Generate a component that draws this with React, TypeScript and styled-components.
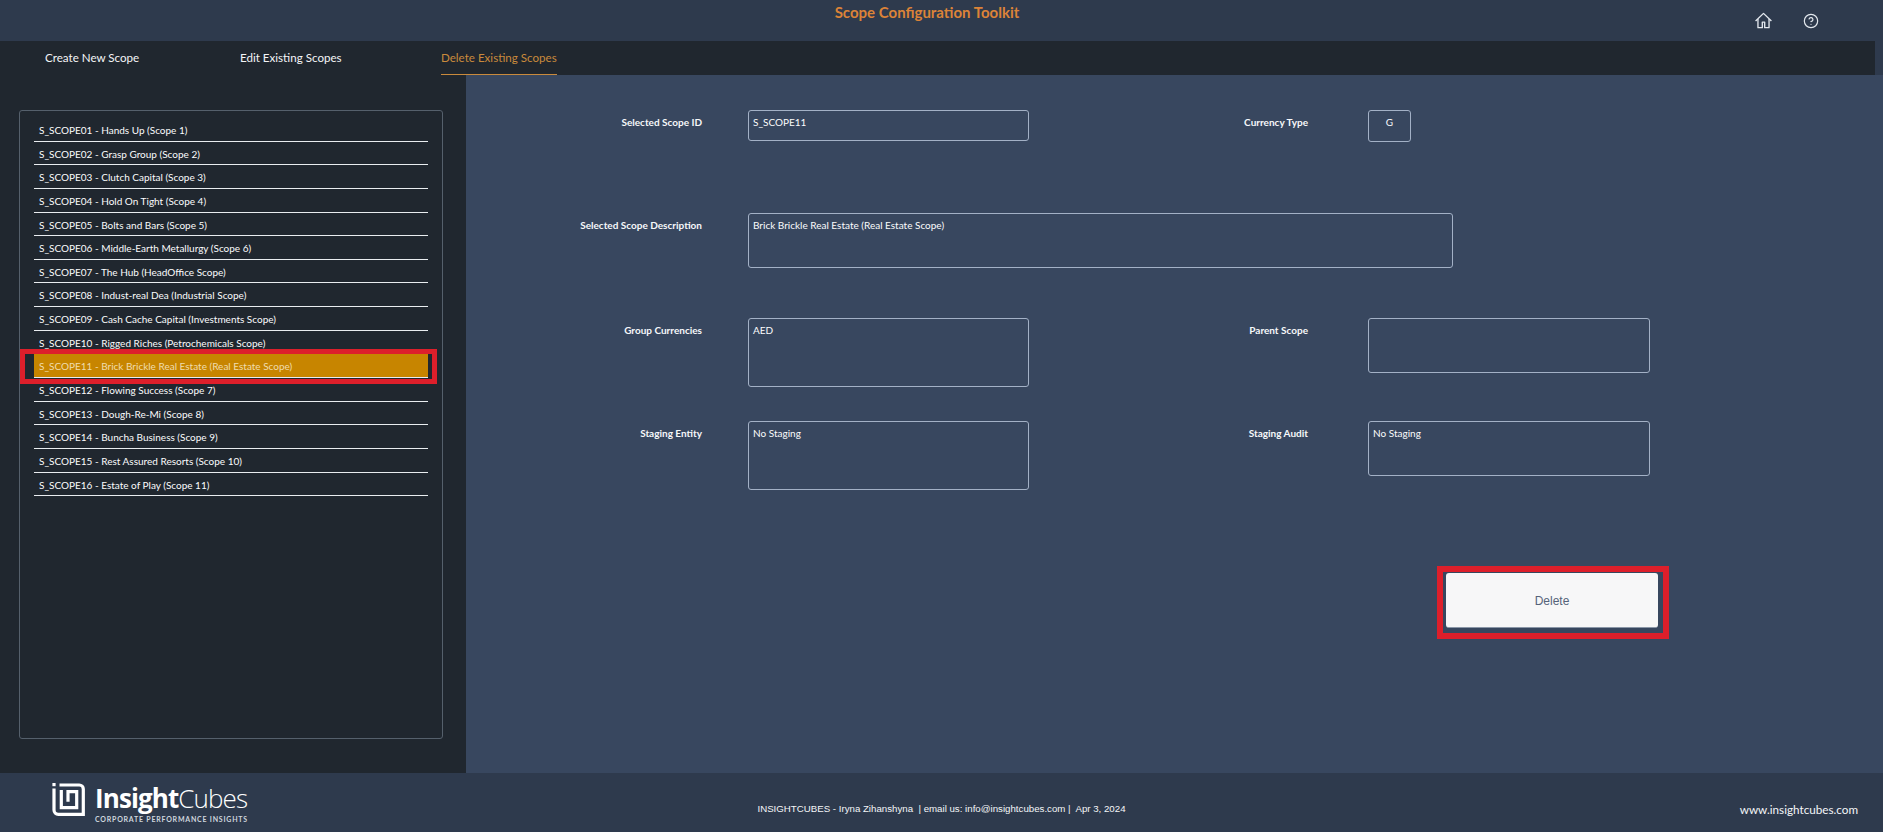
import { createGlobalStyle } from 'styled-components'
import styled from 'styled-components'
import { CircleHelp } from 'lucide-react'

const scopes = [
  'S_SCOPE01 - Hands Up (Scope 1)',
  'S_SCOPE02 - Grasp Group (Scope 2)',
  'S_SCOPE03 - Clutch Capital (Scope 3)',
  'S_SCOPE04 - Hold On Tight (Scope 4)',
  'S_SCOPE05 - Bolts and Bars (Scope 5)',
  'S_SCOPE06 - Middle-Earth Metallurgy (Scope 6)',
  'S_SCOPE07 - The Hub (HeadOffice Scope)',
  'S_SCOPE08 - Indust-real Dea (Industrial Scope)',
  'S_SCOPE09 - Cash Cache Capital (Investments Scope)',
  'S_SCOPE10 - Rigged Riches (Petrochemicals Scope)',
  'S_SCOPE11 - Brick Brickle Real Estate (Real Estate Scope)',
  'S_SCOPE12 - Flowing Success (Scope 7)',
  'S_SCOPE13 - Dough-Re-Mi (Scope 8)',
  'S_SCOPE14 - Buncha Business (Scope 9)',
  'S_SCOPE15 - Rest Assured Resorts (Scope 10)',
  'S_SCOPE16 - Estate of Play (Scope 11)',
]

const GlobalStyle = createGlobalStyle`
  html, body {
    margin: 0;
    padding: 0;
    background: #2e3a4d;
    overflow: hidden;
  }
  * {
    box-sizing: border-box;
  }
`

const Page = styled.div`
  width: 1883px;
  height: 832px;
  display: flex;
  flex-direction: column;
  font-family: Lato, 'Liberation Sans', sans-serif;
  color: #f2f4f6;
`

const Header = styled.header`
  height: 41px;
  display: grid;
  grid-template-columns: 1fr auto 1fr;
  background: #2e3a4d;
`

const Title = styled.h1`
  margin: 3px 29px 0 0;
  font-size: 15px;
  line-height: 18px;
  font-weight: 700;
  color: #dc8338;
`

const HeaderIcons = styled.div`
  display: flex;
  justify-content: flex-end;
  align-items: center;
  gap: 30px;
  padding-right: 64px;
  color: #e3e8ee;
`

const HomeIcon = styled.svg`
  width: 19px;
  height: 19px;
  fill: none;
  stroke: currentColor;
  stroke-width: 1.7;
  stroke-linejoin: round;
`

const TabBar = styled.nav`
  width: 1875px;
  height: 34px;
  display: flex;
  background: #20272f;
`

const Tab = styled.div<{ $active?: boolean; $width: number; $inset?: number }>`
  width: ${props => props.$width}px;
  height: 34px;
  padding: 9px 0 0 ${props => props.$inset ?? 0}px;
  font-size: 11.6px;
  line-height: 16px;
  color: ${props => (props.$active ? '#c98a3c' : '#f4f5f7')};
`

const TabLabel = styled.span`
  display: inline-block;
  height: 25px;
  border-bottom: 1px solid #c98a3c;
`

const Body = styled.div`
  flex: 1;
  display: flex;
  min-height: 0;
`

const Sidebar = styled.aside`
  width: 466px;
  padding: 35px 23px 35px 19px;
  background: #20272f;
`

const ListBox = styled.div`
  height: 629px;
  padding: 7px 14px;
  border: 1px solid #55606c;
  border-radius: 3px;
`

const Row = styled.div<{ $selected?: boolean }>`
  position: relative;
  height: 23.65px;
  padding: 5px 0 0 5px;
  font-size: 10px;
  line-height: 14px;
  white-space: nowrap;
  border-bottom: 1px solid #e9edf0;
  background: ${props => (props.$selected ? '#c78500' : 'transparent')};
  color: ${props => (props.$selected ? '#efdcae' : '#fbfcfd')};
`

const RedMark = styled.div`
  position: absolute;
  top: -5px;
  bottom: -7px;
  left: -14px;
  right: -9px;
  border: 5px solid #dd1f2b;
  pointer-events: none;
`

const Main = styled.main`
  flex: 1;
  padding-top: 35px;
  background: #38475f;
`

const FormRow = styled.div<{ $height: number }>`
  display: flex;
  align-items: flex-start;
  height: ${props => props.$height}px;
`

const Label = styled.div<{ $width: number }>`
  width: ${props => props.$width}px;
  padding-top: 5px;
  font-size: 10px;
  line-height: 14px;
  font-weight: 700;
  text-align: right;
  color: #f6f8fa;
`

const Field = styled.div<{ $width: number; $height: number; $gap: number; $center?: boolean }>`
  width: ${props => props.$width}px;
  height: ${props => props.$height}px;
  margin-left: ${props => props.$gap}px;
  padding: 4px;
  font-size: 10px;
  line-height: 14px;
  border: 1px solid #a3b1c6;
  border-radius: 3px;
  text-align: ${props => (props.$center ? 'center' : 'left')};
  color: #fbfcfd;
`

const ActionRow = styled.div`
  display: flex;
  justify-content: flex-end;
  padding-right: 214px;
  margin-top: 75px;
`

const RedFrame = styled.div`
  padding: 1px 5px 5px 3px;
  border: 6px solid #dd1f2b;
`

const DeleteButton = styled.button`
  display: block;
  width: 212px;
  height: 55px;
  padding: 2px 0 0;
  border: none;
  border-bottom: 1px solid #8b97a8;
  border-radius: 3px;
  background: #f7f7f8;
  font-family: 'Liberation Sans', Arial, sans-serif;
  font-size: 12px;
  color: #55637a;
`

const Footer = styled.footer`
  height: 59px;
  display: grid;
  grid-template-columns: 1fr auto 1fr;
  padding: 0 25px 0 52px;
  background: #2e3a4d;
`

const Logo = styled.div`
  display: flex;
  gap: 10px;
  margin-top: 10px;
`

const LogoMark = styled.svg`
  width: 33px;
  height: 33px;
  flex-shrink: 0;
  fill: none;
  stroke: #fff;
  stroke-width: 3.2;
`

const LogoWords = styled.div`
  display: flex;
  flex-direction: column;
`

const LogoName = styled.div`
  font-family: 'Open Sans', Lato, sans-serif;
  font-size: 26px;
  line-height: 31px;
  letter-spacing: -0.9px;
  font-weight: 300;
  color: #fff;

  b {
    font-weight: 700;
  }
`

const LogoTag = styled.div`
  font-size: 7px;
  line-height: 10px;
  font-weight: 700;
  letter-spacing: 0.78px;
  white-space: nowrap;
  color: #cfd6de;
`

const FooterText = styled.div`
  margin: 29px 27px 0 0;
  font-family: 'Liberation Sans', Arial, sans-serif;
  font-size: 9.7px;
  line-height: 14px;
  white-space: pre;
  color: #f4f6f8;
`

const FooterLink = styled.div`
  margin-top: 28px;
  font-size: 11.7px;
  line-height: 16px;
  text-align: right;
  color: #f4f6f8;
`

export default function App() {
  return (
    <Page>
      <GlobalStyle />
      <Header>
        <span />
        <Title>Scope Configuration Toolkit</Title>
        <HeaderIcons>
          <HomeIcon viewBox="0 0 24 24">
            <path d="M2 12.5 12 3l10 9.5" />
            <path d="M5 10v11h5.5v-7h3v7H19V10" />
          </HomeIcon>
          <CircleHelp size={16} strokeWidth={1.8} />
        </HeaderIcons>
      </Header>
      <TabBar>
        <Tab $width={240} $inset={45}>Create New Scope</Tab>
        <Tab $width={201}>Edit Existing Scopes</Tab>
        <Tab $width={200} $active>
          <TabLabel>Delete Existing Scopes</TabLabel>
        </Tab>
      </TabBar>
      <Body>
        <Sidebar>
          <ListBox>
            {scopes.map(scope => {
              const selected = scope.startsWith('S_SCOPE11')
              return (
                <Row key={scope} $selected={selected}>
                  {scope}
                  {selected && <RedMark />}
                </Row>
              )
            })}
          </ListBox>
        </Sidebar>
        <Main>
          <FormRow $height={103}>
            <Label $width={236}>Selected Scope ID</Label>
            <Field $width={281} $height={31} $gap={46}>S_SCOPE11</Field>
            <Label $width={279}>Currency Type</Label>
            <Field $width={43} $height={32} $gap={60} $center>G</Field>
          </FormRow>
          <FormRow $height={105}>
            <Label $width={236}>Selected Scope Description</Label>
            <Field $width={705} $height={55} $gap={46}>Brick Brickle Real Estate (Real Estate Scope)</Field>
          </FormRow>
          <FormRow $height={103}>
            <Label $width={236}>Group Currencies</Label>
            <Field $width={281} $height={69} $gap={46}>AED</Field>
            <Label $width={279}>Parent Scope</Label>
            <Field $width={282} $height={55} $gap={60} />
          </FormRow>
          <FormRow $height={70}>
            <Label $width={236}>Staging Entity</Label>
            <Field $width={281} $height={69} $gap={46}>No Staging</Field>
            <Label $width={279}>Staging Audit</Label>
            <Field $width={282} $height={55} $gap={60}>No Staging</Field>
          </FormRow>
          <ActionRow>
            <RedFrame>
              <DeleteButton>Delete</DeleteButton>
            </RedFrame>
          </ActionRow>
        </Main>
      </Body>
      <Footer>
        <Logo>
          <LogoMark viewBox="0 0 33 33">
            <path d="M2 0v3.2" />
            <path d="M2 5.5V27a4.3 4.3 0 0 0 4.3 4.3h25V6a4 4 0 0 0-4-4H7.5" />
            <path d="M9.3 7v17.7h15.4v-16H16v10" />
          </LogoMark>
          <LogoWords>
            <LogoName><b>Insight</b>Cubes</LogoName>
            <LogoTag>CORPORATE PERFORMANCE INSIGHTS</LogoTag>
          </LogoWords>
        </Logo>
        <FooterText>INSIGHTCUBES - Iryna Zihanshyna  | email us: info@insightcubes.com |  Apr 3, 2024</FooterText>
        <FooterLink>www.insightcubes.com</FooterLink>
      </Footer>
    </Page>
  )
}
